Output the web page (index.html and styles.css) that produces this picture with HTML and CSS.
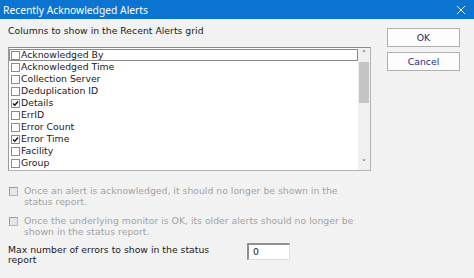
FILE: index.html
```html
<!DOCTYPE html>
<html lang="en">
<head>
    <meta charset="UTF-8">
    <title>Recently Acknowledged Alerts</title>
    <link rel="stylesheet" href="styles.css">
</head>
<body>
    <div class="window">
        <div class="titlebar">
            <span class="title">Recently Acknowledged Alerts</span>
            <svg class="close" viewBox="0 0 10 10" width="10" height="10"><path d="M1 1 L9 9 M9 1 L1 9" stroke="#fff" stroke-width="1"/></svg>
        </div>
        <div class="content">
            <div class="main">
                <div class="label">Columns to show in the Recent Alerts grid</div>
                <div class="listbox">
                    <div class="rows">
                        <div class="row focus"><span class="box"></span>Acknowledged By</div>
                        <div class="row"><span class="box"></span>Acknowledged Time</div>
                        <div class="row"><span class="box"></span>Collection Server</div>
                        <div class="row"><span class="box"></span>Deduplication ID</div>
                        <div class="row"><span class="box checked"><svg viewBox="0 0 7 7" width="7" height="7"><path d="M1 3.5 L2.8 5.3 L6 1.5" fill="none" stroke="#111" stroke-width="1.4"/></svg></span>Details</div>
                        <div class="row"><span class="box"></span>ErrID</div>
                        <div class="row"><span class="box"></span>Error Count</div>
                        <div class="row"><span class="box checked"><svg viewBox="0 0 7 7" width="7" height="7"><path d="M1 3.5 L2.8 5.3 L6 1.5" fill="none" stroke="#111" stroke-width="1.4"/></svg></span>Error Time</div>
                        <div class="row"><span class="box"></span>Facility</div>
                        <div class="row"><span class="box"></span>Group</div>
                    </div>
                    <div class="scrollbar">
                        <div class="arrow">&#x2C4;</div>
                        <div class="track"><div class="thumb"></div></div>
                        <div class="arrow">&#x2C5;</div>
                    </div>
                </div>
                <div class="option">
                    <span class="dbox"></span>
                    <span>Once an alert is acknowledged, it should no longer be shown in the status report.</span>
                </div>
                <div class="option">
                    <span class="dbox"></span>
                    <span>Once the underlying monitor is OK, its older alerts should no longer be shown in the status report.</span>
                </div>
                <div class="maxrow">
                    <div class="maxlabel">Max number of errors to show in the status report</div>
                    <div class="numbox">0</div>
                </div>
            </div>
            <div class="side">
                <button class="btn">OK</button>
                <button class="btn">Cancel</button>
            </div>
        </div>
    </div>
</body>
</html>
```

FILE: styles.css
```css
body {
    margin: 0;
    background: #f2f2f2;
    font-family: 'DejaVu Sans', Verdana, sans-serif;
    font-size: 9.3px;
    color: #1a1a1a;
}
.window {
    width: 474px;
    height: 278px;
    background: #f2f2f2;
    overflow: hidden;
}
.titlebar {
    height: 19px;
    background: #0a74d0;
    color: #fff;
    display: flex;
    align-items: center;
    justify-content: space-between;
    padding: 0 8px 0 3px;
    font-family: 'Noto Sans', sans-serif;
    font-size: 10.3px;
}
.content {
    display: flex;
    padding: 6px 0 0 8px;
}
.main {
    width: 363px;
}
.label {
    line-height: 12px;
    margin-bottom: 10px;
}
.listbox {
    display: flex;
    height: 122px;
    border: 1px solid #b4b4b4;
    border-top-color: #8c8c8c;
    border-left-color: #9a9a9a;
    background: #fff;
}
.rows {
    flex: 1;
    padding-top: 1px;
}
.row {
    height: 12px;
    line-height: 12px;
    display: flex;
    align-items: center;
    padding-left: 2px;
    box-sizing: border-box;
}
.row.focus {
    border: 1px solid #8a8a8a;
    padding-left: 1px;
}
.box {
    width: 7px;
    height: 7px;
    border: 1px solid #8c8c8c;
    background: #fff;
    margin-right: 1px;
    display: flex;
    align-items: center;
    justify-content: center;
}
.scrollbar {
    width: 12px;
    background: #f0f0f0;
    display: flex;
    flex-direction: column;
}
.arrow {
    height: 13px;
    line-height: 13px;
    text-align: center;
    font-size: 9px;
    color: #606060;
}
.track {
    flex: 1;
}
.thumb {
    height: 41px;
    margin: 1px 1px 0 1px;
    background: #c4c4c4;
}
.option {
    display: flex;
    color: #a2a2a2;
    line-height: 11px;
    margin-top: 14px;
    padding-right: 14px;
}
.option + .option {
    margin-top: 8px;
}
.dbox {
    flex: none;
    width: 7px;
    height: 7px;
    margin: 2px 6px 0 1px;
    border: 1px solid #b8b8b8;
    border-top-color: #9a9a9a;
    border-left-color: #9a9a9a;
    background: #e6e6e6;
}
.maxrow {
    display: flex;
    align-items: flex-start;
    margin-top: 8px;
}
.maxlabel {
    width: 215px;
    line-height: 10px;
}
.numbox {
    margin: -2px 0 0 24px;
    width: 36px;
    height: 14px;
    line-height: 14px;
    padding-left: 4px;
    background: #fff;
    border: 1px solid #e0e0e0;
    border-top: 2px solid #909090;
    border-left: 2px solid #909090;
}
.side {
    display: flex;
    flex-direction: column;
    gap: 5px;
    margin: 3px 0 0 16px;
}
.btn {
    width: 73px;
    height: 19px;
    background: #fdfdfd;
    border: 1px solid #b0b0b0;
    font-family: 'DejaVu Sans', Verdana, sans-serif;
    font-size: 9.3px;
    color: #2a2a7a;
    padding: 0;
}
```
